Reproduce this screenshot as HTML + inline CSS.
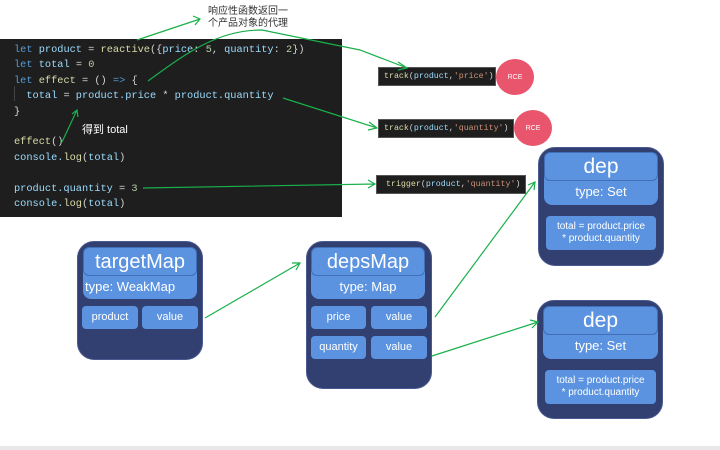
<!DOCTYPE html>
<html><head><meta charset="utf-8"><style>
*{margin:0;padding:0;box-sizing:border-box}
body{width:720px;height:450px;background:#fff;position:relative;overflow:hidden;font-family:"Liberation Sans","Noto Sans CJK SC",sans-serif}
.a{position:absolute}
.code{left:0;top:39px;width:342px;height:178px;background:#1e1e1e}
.code pre{position:absolute;left:14px;top:4px;font-family:"Liberation Mono",monospace;font-size:10.3px;line-height:15.4px;color:#9cdcfe}
.k{color:#569cd6}.f{color:#dcdcaa}.n{color:#b5cea8}.w{color:#d4d4d4}.s{color:#ce9178}
.tb{background:#1e1e1e;border:1px solid #555;font-family:"Liberation Mono",monospace;font-size:8.3px;color:#9cdcfe;line-height:17px;padding-left:5px;white-space:nowrap;overflow:hidden}
.rce{background:#e8556d;border-radius:50%;color:#fff;font-size:7px;display:flex;align-items:center;justify-content:center}
.box{background:#324071;border-radius:17px;border:1px solid #4a5a90}
.hd{background:#5b93e0;border-radius:6px;border:1px solid #3f6fb8;color:#fff;text-align:center}
.ty{background:#5b93e0;border-radius:0 0 8px 8px;color:#fff;text-align:center}
.c{background:#5b93e0;border-radius:4px;color:#fff;text-align:center;font-size:11px;line-height:23px}
</style></head><body>
<div class="a" style="left:208px;top:6px;font-size:10px;line-height:12px;color:#333">响应性函数返回一<br>个产品对象的代理</div>
<div class="a code"><pre><span class="k">let</span> product <span class="w">=</span> <span class="f">reactive</span><span class="w">({</span>price<span class="w">:</span> <span class="n">5</span><span class="w">,</span> quantity<span class="w">:</span> <span class="n">2</span><span class="w">})</span>
<span class="k">let</span> total <span class="w">=</span> <span class="n">0</span>
<span class="k">let</span> <span class="f">effect</span> <span class="w">=</span> <span class="w">()</span> <span class="k">=&gt;</span> <span class="w">{</span>
  total <span class="w">=</span> product.price <span class="w">*</span> product.quantity
<span class="w">}</span>

<span class="f">effect</span><span class="w">()</span>
console.<span class="f">log</span><span class="w">(</span>total<span class="w">)</span>

product.quantity <span class="w">=</span> <span class="n">3</span>
console.<span class="f">log</span><span class="w">(</span>total<span class="w">)</span></pre>
<div class="a" style="left:14px;top:47px;width:1px;height:15px;background:#444"></div>
<div class="a" style="left:82px;top:82px;color:#fff;font-size:11px">得到 total</div>
</div>
<div class="a tb" style="left:378px;top:67px;width:118px;height:19px"><span class="f">track</span><span class="w">(</span>product<span class="w">,</span><span class="s">'price'</span><span class="w">)</span></div>
<div class="a rce" style="left:496px;top:59px;width:38px;height:36px">RCE</div>
<div class="a tb" style="left:378px;top:119px;width:136px;height:19px"><span class="f">track</span><span class="w">(</span>product<span class="w">,</span><span class="s">'quantity'</span><span class="w">)</span></div>
<div class="a rce" style="left:514px;top:110px;width:38px;height:36px">RCE</div>
<div class="a tb" style="left:376px;top:175px;width:150px;height:19px;padding-left:9px"><span class="f">trigger</span><span class="w">(</span>product<span class="w">,</span><span class="s">'quantity'</span><span class="w">)</span></div>

<!-- dep 1 -->
<div class="a box" style="left:538px;top:147px;width:126px;height:119px"></div>
<div class="a ty" style="left:544px;top:170px;width:114px;height:35px;font-size:13px;line-height:44px">type: Set</div>
<div class="a hd" style="left:544px;top:152px;width:114px;height:29px;font-size:21px;line-height:28px">dep</div>
<div class="a c" style="left:546px;top:216px;width:110px;height:34px;font-size:10px;line-height:12px;padding-top:5px">total = product.price<br>* product.quantity</div>
<!-- dep 2 -->
<div class="a box" style="left:537px;top:300px;width:126px;height:119px"></div>
<div class="a ty" style="left:543px;top:324px;width:115px;height:35px;font-size:13px;line-height:44px">type: Set</div>
<div class="a hd" style="left:543px;top:306px;width:115px;height:29px;font-size:21px;line-height:28px">dep</div>
<div class="a c" style="left:545px;top:370px;width:111px;height:34px;font-size:10px;line-height:12px;padding-top:5px">total = product.price<br>* product.quantity</div>
<!-- targetMap -->
<div class="a box" style="left:77px;top:241px;width:126px;height:119px"></div>
<div class="a ty" style="left:83px;top:265px;width:114px;height:34px;font-size:13px;line-height:44px;text-align:left;padding-left:2px">type: WeakMap</div>
<div class="a hd" style="left:83px;top:247px;width:114px;height:29px;font-size:20px;line-height:28px">targetMap</div>
<div class="a c" style="left:82px;top:306px;width:56px;height:23px">product</div>
<div class="a c" style="left:142px;top:306px;width:56px;height:23px">value</div>
<!-- depsMap -->
<div class="a box" style="left:306px;top:241px;width:126px;height:148px"></div>
<div class="a ty" style="left:311px;top:265px;width:114px;height:34px;font-size:13px;line-height:44px">type: Map</div>
<div class="a hd" style="left:311px;top:247px;width:114px;height:29px;font-size:20px;line-height:28px">depsMap</div>
<div class="a c" style="left:311px;top:306px;width:55px;height:23px">price</div>
<div class="a c" style="left:371px;top:306px;width:56px;height:23px">value</div>
<div class="a c" style="left:311px;top:336px;width:55px;height:23px">quantity</div>
<div class="a c" style="left:371px;top:336px;width:56px;height:23px">value</div>

<svg class="a" style="left:0;top:0" width="720" height="450" fill="none" stroke="#19b04b" stroke-width="1.2">
<path d="M137,40 L200,19 M193,16 L200,19 L195,25"/>
<path d="M148,81 C190,50 220,30 262,30 L360,50 L407,68 M398,62 L407,68 L398,70"/>
<path d="M283,98 L377,128 M369,122 L377,128 L368,130"/>
<path d="M143,188 L375,184 M368,180 L375,184 L368,188"/>
<path d="M62,142 L77,110 M72,114 L77,110 L78,117"/>
<path d="M205,318 L300,263 M292,263 L300,263 L296,270"/>
<path d="M435,317 L535,182 M528,185 L535,182 L534,190"/>
<path d="M432,356 L538,322 M530,320 L538,322 L532,328"/>
</svg>
<div class="a" style="left:0;top:446px;width:720px;height:4px;background:#e8e8e8"></div>
</body></html>
